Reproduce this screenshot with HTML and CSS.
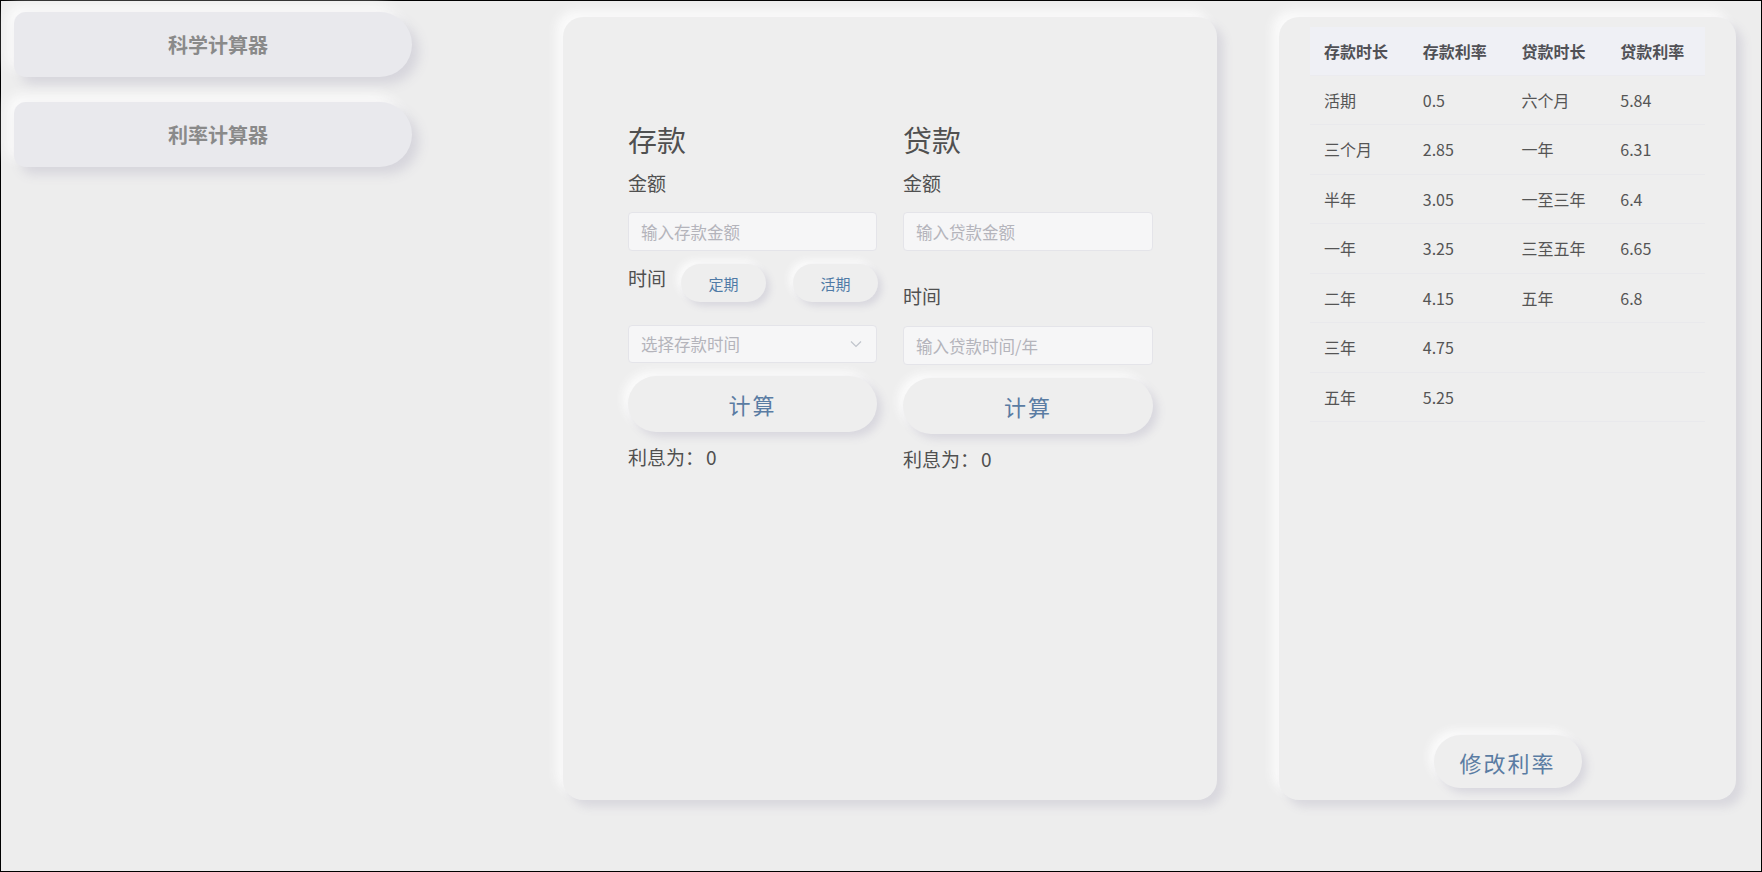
FILE: index.html
```html
<!DOCTYPE html>
<html lang="zh-CN">
  <head>
    <meta charset="UTF-8" />
    <meta name="viewport" content="width=device-width, initial-scale=1.0" />
    <title>利率计算器</title>
    <link rel="stylesheet" href="styles.css">
  </head>
  <body>
    <div class="app">
      <nav class="side-nav">
        <button class="nav-btn">科学计算器</button>
        <button class="nav-btn">利率计算器</button>
      </nav>

      <main class="calc-card">
        <!-- deposit -->
        <section class="calc-col">
          <h2 class="calc-title">存款</h2>
          <div class="field-label">金额</div>
          <input class="text-input" type="text" placeholder="输入存款金额" />
          <div class="time-row">
            <span class="field-label">时间</span>
            <button class="type-btn">定期</button>
            <button class="type-btn">活期</button>
          </div>
          <div class="select-box">
            <span class="select-placeholder">选择存款时间</span>
            <svg class="select-arrow" width="12" height="8" viewBox="0 0 12 8">
              <path d="M1 1.5 L6 6.5 L11 1.5" fill="none" stroke="#c0c4cc" stroke-width="1.2" />
            </svg>
          </div>
          <button class="calc-btn">计算</button>
          <div class="result">利息为：<span class="result-num">0</span></div>
        </section>

        <!-- loan -->
        <section class="calc-col">
          <h2 class="calc-title">贷款</h2>
          <div class="field-label">金额</div>
          <input class="text-input" type="text" placeholder="输入贷款金额" />
          <div class="field-label loan-time">时间</div>
          <input class="text-input loan-years" type="text" placeholder="输入贷款时间/年" />
          <button class="calc-btn">计算</button>
          <div class="result">利息为：<span class="result-num">0</span></div>
        </section>
      </main>

      <aside class="rate-card">
        <table class="rate-table">
          <thead>
            <tr>
              <th>存款时长</th>
              <th>存款利率</th>
              <th>贷款时长</th>
              <th>贷款利率</th>
            </tr>
          </thead>
          <tbody>
            <tr><td>活期</td><td>0.5</td><td>六个月</td><td>5.84</td></tr>
            <tr><td>三个月</td><td>2.85</td><td>一年</td><td>6.31</td></tr>
            <tr><td>半年</td><td>3.05</td><td>一至三年</td><td>6.4</td></tr>
            <tr><td>一年</td><td>3.25</td><td>三至五年</td><td>6.65</td></tr>
            <tr><td>二年</td><td>4.15</td><td>五年</td><td>6.8</td></tr>
            <tr><td>三年</td><td>4.75</td><td></td><td></td></tr>
            <tr><td>五年</td><td>5.25</td><td></td><td></td></tr>
          </tbody>
        </table>
        <button class="edit-btn">修改利率</button>
      </aside>
    </div>
  </body>
</html>
```

FILE: styles.css
```css
* {
  padding: 0;
  margin: 0;
  box-sizing: border-box;
}
html,
body {
  font-family: "Noto Sans CJK SC", "Noto Sans", sans-serif;
  font-size: 16px;
  color: #555;
  background-color: #ededed;
}

button {
  font-family: inherit;
  border: none;
  cursor: pointer;
}

.app {
  display: flex;
  align-items: flex-start;
  height: 872px;
  border: 1px solid #000;
  padding: 11px 25px 0 13px;
}

/* left menu */
.side-nav {
  width: 398px;
  flex-shrink: 0;
}

.nav-btn {
  display: block;
  width: 398px;
  height: 65px;
  margin-bottom: 25px;
  padding-left: 10px;
  border-radius: 12px 33px 33px 12px;
  background-color: #e9e9ed;
  color: #8a8a8a;
  font-size: 20px;
  font-weight: bold;
  box-shadow: 7px 7px 12px #d6d5dc, -7px -7px 12px #fbfbfb;
}

/* calculator */
.calc-card {
  display: flex;
  gap: 26px;
  flex-shrink: 0;
  width: 654px;
  height: 783px;
  margin: 5px 0 0 151px;
  padding: 104px 64px 0 65px;
  border-radius: 20px;
  background-color: #eeeeee;
  box-shadow: 7px 7px 10px #d9d8de, -7px -7px 10px #fafafa;
}

.calc-col {
  width: 249px;
  display: flex;
  flex-direction: column;
  align-items: flex-start;
}
.calc-col + .calc-col {
  width: 250px;
}

.calc-title {
  font-size: 29px;
  font-weight: normal;
  line-height: 36px;
  color: #505050;
}

.field-label {
  font-size: 19px;
  line-height: 28px;
  margin-top: 12px;
  color: #505050;
  white-space: nowrap;
}

.text-input {
  width: 100%;
  height: 39px;
  margin-top: 15px;
  padding: 0 12px;
  border: 1px solid #e4e4e9;
  border-radius: 4px;
  background-color: #f6f6f7;
  font-family: inherit;
  font-size: 16.5px;
  color: #555;
  outline: none;
}
.text-input::placeholder {
  color: #b4b4bb;
}

.time-row {
  display: flex;
  align-items: flex-start;
  margin-top: 13px;
}
.time-row .field-label {
  margin-top: 0;
  flex-shrink: 0;
}

.type-btn {
  flex-shrink: 0;
  width: 85px;
  height: 38px;
  margin-left: 15px;
  border-radius: 19px;
  background-color: #eeeeee;
  color: #4f7aa6;
  font-size: 15px;
  box-shadow: 4px 4px 7px #d8d7de, -4px -4px 7px #fbfbfb;
}
.type-btn + .type-btn {
  margin-left: 27px;
}

.select-box {
  width: 100%;
  height: 38px;
  margin-top: 23px;
  padding: 0 14px 0 12px;
  display: flex;
  align-items: center;
  justify-content: space-between;
  border: 1px solid #e4e4e9;
  border-radius: 4px;
  background-color: #f6f6f7;
}
.select-placeholder {
  font-size: 16.5px;
  color: #b4b4bb;
}

.loan-time {
  margin-top: 31px;
}
.loan-years {
  margin-top: 16px;
}

.calc-btn {
  width: 100%;
  height: 56px;
  margin-top: 13px;
  border-radius: 28px;
  background-color: #eeeeee;
  color: #5a7ca3;
  font-size: 22px;
  letter-spacing: 2px;
  box-shadow: 5px 5px 9px #d8d7de, -5px -5px 9px #fbfbfb;
}

.result {
  margin-top: 11px;
  font-size: 19px;
  line-height: 28px;
  color: #505050;
}
.result-num {
  margin-left: 2px;
}

/* rate table */
.rate-card {
  display: flex;
  flex-direction: column;
  align-items: center;
  flex-shrink: 0;
  width: 457px;
  height: 783px;
  margin: 5px 0 0 62px;
  padding: 10px 31px 12px;
  border-radius: 20px;
  background-color: #eeeeee;
  box-shadow: 7px 7px 10px #d9d8de, -7px -7px 10px #fafafa;
}

.rate-table {
  width: 100%;
  border-collapse: collapse;
  table-layout: fixed;
  font-size: 16px;
  text-align: left;
}
.rate-table th {
  height: 48px;
  padding: 0 0 0 14px;
  background-color: #eff0f5;
  font-weight: bold;
  color: #505055;
  border-bottom: 1px solid #ebebef;
}
.rate-table td {
  height: 49.5px;
  padding: 0 0 0 14px;
  color: #555;
  border-bottom: 1px solid #e9e9ec;
}

.edit-btn {
  width: 148px;
  height: 53px;
  margin-top: auto;
  border-radius: 27px;
  background-color: #eeeeee;
  color: #5a7ca3;
  font-size: 22px;
  letter-spacing: 2px;
  box-shadow: 5px 5px 9px #d8d7de, -5px -5px 9px #fbfbfb;
}
```
